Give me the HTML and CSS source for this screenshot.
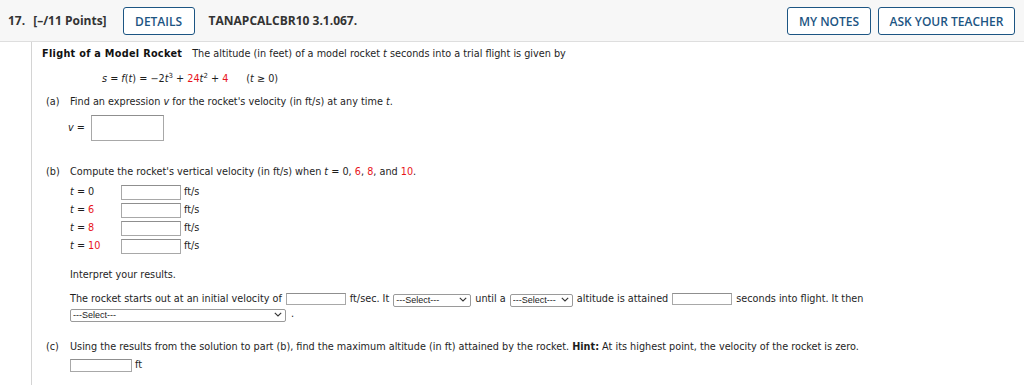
FILE: index.html
```html
<!DOCTYPE html>
<html>
<head>
<meta charset="utf-8">
<link rel="stylesheet" href="styles.css">
</head>
<body>
<header class="qhead">
  <span class="qnum">17.</span>
  <span class="qpts">[–/11 Points]</span>
  <button class="btn btn-details">DETAILS</button>
  <span class="qid">TANAPCALCBR10 3.1.067.</span>
  <span class="spacer"></span>
  <button class="btn btn-notes">MY NOTES</button>
  <button class="btn btn-ask">ASK YOUR TEACHER</button>
</header>
<main class="qbody">
  <div class="intro"><b class="title">Flight of a Model Rocket</b><span>The altitude (in feet) of a model rocket <i>t</i> seconds into a trial flight is given by</span></div>
  <div class="eq"><i>s</i> = <i>f</i>(<i>t</i>) = −2<i>t</i><sup>3</sup> + <span class="red">24</span><i>t</i><sup>2</sup> + <span class="red">4</span><span class="cond">(<i>t</i> ≥ 0)</span></div>

  <div class="part pa"><span class="plabel">(a)</span><span>Find an expression <i>v</i> for the rocket's velocity (in ft/s) at any time <i>t</i>.</span></div>
  <div class="vrow"><span class="vlab"><i>v</i> =</span><input class="inp inp-v" type="text"></div>

  <div class="part pb"><span class="plabel">(b)</span><span>Compute the rocket's vertical velocity (in ft/s) when <i>t</i> = 0, <span class="red">6</span>, <span class="red">8</span>, and <span class="red">10</span>.</span></div>
  <div class="trows">
    <div class="trow"><span class="tlab"><i>t</i> = 0</span><input class="inp inp-t" type="text"><span class="unit">ft/s</span></div>
    <div class="trow"><span class="tlab"><i>t</i> = <span class="red">6</span></span><input class="inp inp-t" type="text"><span class="unit">ft/s</span></div>
    <div class="trow"><span class="tlab"><i>t</i> = <span class="red">8</span></span><input class="inp inp-t" type="text"><span class="unit">ft/s</span></div>
    <div class="trow"><span class="tlab"><i>t</i> = <span class="red">10</span></span><input class="inp inp-t" type="text"><span class="unit">ft/s</span></div>
  </div>

  <div class="interp">Interpret your results.</div>
  <div class="sentence">
    <div class="sline">
      <span>The rocket starts out at an initial velocity of</span>
      <input class="inp inp-s" type="text">
      <span>ft/sec. It</span>
      <span class="sel sel-1"><select><option>---Select---</option></select><svg class="chev" viewBox="0 0 8 5" width="8" height="5"><path d="M0.8 0.8 L4 4 L7.2 0.8" fill="none" stroke="#333" stroke-width="1.1"/></svg></span>
      <span>until a</span>
      <span class="sel sel-2"><select><option>---Select---</option></select><svg class="chev" viewBox="0 0 8 5" width="8" height="5"><path d="M0.8 0.8 L4 4 L7.2 0.8" fill="none" stroke="#333" stroke-width="1.1"/></svg></span>
      <span>altitude is attained</span>
      <input class="inp inp-s" type="text">
      <span>seconds into flight. It then</span>
    </div>
    <div class="sline sline2">
      <span class="sel sel-3"><select><option>---Select---</option></select><svg class="chev" viewBox="0 0 8 5" width="8" height="5"><path d="M0.8 0.8 L4 4 L7.2 0.8" fill="none" stroke="#333" stroke-width="1.1"/></svg></span>
      <span>.</span>
    </div>
  </div>

  <div class="part pc"><span class="plabel">(c)</span><span>Using the results from the solution to part (b), find the maximum altitude (in ft) attained by the rocket. <b>Hint:</b> At its highest point, the velocity of the rocket is zero.</span></div>
  <div class="crow"><input class="inp inp-c" type="text"><span class="unit">ft</span></div>
</main>
</body>
</html>
```

FILE: styles.css
```css
* { box-sizing: border-box; }
html, body { margin: 0; padding: 0; background: #fff; }
body { width: 1024px; height: 385px; overflow: hidden; }

.qhead {
  height: 42px;
  background: #f7f7f7;
  border-bottom: 1px solid #dedede;
  display: flex;
  align-items: center;
  padding: 0 9px 0 8px;
  font-family: "Open Sans", "Liberation Sans", sans-serif;
  font-weight: 700;
  font-size: 12px;
  color: #333;
}
.qnum { margin-right: 8px; }
.qpts { margin-right: 16px; }
.qid { margin-left: 14px; }
.spacer { flex: 1; }
.btn {
  font-family: "Open Sans", "Liberation Sans", sans-serif;
  font-weight: 600;
  font-size: 12px;
  color: #1c5583;
  background: #fff;
  border: 1px solid #1c5583;
  border-radius: 3px;
  height: 28px;
  padding: 0;
  margin-top: 1px;
}
.btn-details { width: 72px; }
.btn-notes { width: 84px; margin-right: 7px; }
.btn-ask { width: 137px; }

.qbody {
  display: block;
  margin-left: 31px;
  border-left: 1px solid #d4d4d4;
  padding: 5px 0 0 10px;
  height: 343px;
  font-family: "DejaVu Sans", Verdana, sans-serif;
  font-size: 9.7px;
  color: #1e1e1e;
  line-height: 14px;
}
.red { color: #e8141b; }
sup { font-size: 7px; line-height: 0; vertical-align: 4px; }

.title { font-weight: 700; margin-right: 10px; color: #111; letter-spacing: 0.3px; }
.eq { margin-top: 11px; padding-left: 60px; }
.cond { margin-left: 18px; }

.part { display: flex; padding-left: 4px; }
.plabel { width: 24px; flex: none; }
.pa { margin-top: 9px; }

.vrow { display: flex; align-items: center; margin-top: 6px; padding-left: 26px; }
.vlab { width: 23px; }

.inp {
  border: 1px solid #a8a8a8;
  border-top-color: #8f8f8f;
  background: #fff;
  padding: 0;
  margin: 0;
  font: inherit;
}
.inp-v { width: 73px; height: 26px; }

.pb { margin-top: 24px; }
.trows { padding-left: 28px; margin-top: 4px; }
.trow { display: flex; align-items: center; height: 18px; }
.tlab { width: 51px; }
.inp-t { width: 60px; height: 15px; }
.unit { margin-left: 3px; }

.interp { margin-top: 13px; padding-left: 28px; }
.sentence { margin-top: 10px; padding-left: 28px; }
.sline { display: flex; align-items: center; gap: 4px; height: 14px; }
.sline2 { margin-top: 1px; gap: 5px; }
.inp-s { width: 60px; height: 12px; }

.sel { position: relative; display: inline-block; height: 13px; }
.sel select {
  -webkit-appearance: none;
  appearance: none;
  height: 13px;
  border: 1px solid #9a9a9a;
  border-radius: 2px;
  background: #fff;
  font-family: "Liberation Sans", Arial, sans-serif;
  font-size: 9px;
  color: #222;
  padding: 0 0 0 2px;
  margin: 0;
  width: 100%;
  line-height: 11px;
}
.chev { position: absolute; right: 4px; top: 4px; }
.sel-1 { width: 78px; }
.sel-2 { width: 63px; }
.sel-3 { width: 216px; }

.pc { margin-top: 19px; }
.crow { display: flex; align-items: center; padding-left: 28px; margin-top: 4px; }
.inp-c { width: 62px; height: 13px; }
```
